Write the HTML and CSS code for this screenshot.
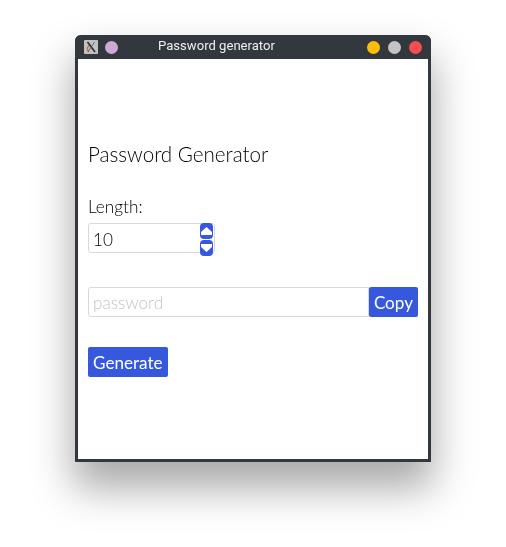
FILE: index.html
```html
<!DOCTYPE html>
<html lang="en">
<head>
<meta charset="utf-8">
<title>Password generator</title>
<link rel="stylesheet" href="styles.css">
</head>
<body>
<div class="window">
  <header class="titlebar">
    <div class="tb-left">
      <svg class="app-icon" width="14" height="14" viewBox="0 0 14 14">
        <rect width="14" height="14" rx="1" fill="#bfc1c2"/>
        <path d="M5.5 5 Q1.5 8.5 5 12" stroke="#d9682b" stroke-width="1.3" fill="none"/>
        <path d="M3.5 2 L11 12" stroke="#2f3133" stroke-width="1.7" fill="none"/>
        <path d="M10.5 2 L4 12" stroke="#55585a" stroke-width=".8" fill="none"/>
      </svg>
      <span class="dot dot-pin"></span>
    </div>
    <div class="tb-title">Password generator</div>
    <div class="tb-right">
      <span class="dot dot-min"></span>
      <span class="dot dot-max"></span>
      <span class="dot dot-close"></span>
    </div>
  </header>
  <main class="content">
    <h1 class="heading">Password Generator</h1>
    <label class="label" for="len">Length:</label>
    <div class="number">
      <span class="number-val" id="len">10</span>
      <div class="spin">
        <span class="spin-btn"><svg width="11" height="8" viewBox="0 0 11 8"><path d="M5.5 0 L11 5 V8 H0 V5 Z" fill="#fff"/></svg></span>
        <span class="spin-btn"><svg width="11" height="8" viewBox="0 0 11 8"><path d="M0 0 H11 V3 L5.5 8 L0 3 Z" fill="#fff"/></svg></span>
      </div>
    </div>
    <div class="pw-row">
      <input class="pw" type="text" placeholder="password">
      <button class="btn" type="button">Copy</button>
    </div>
    <button class="btn gen" type="button">Generate</button>
  </main>
</div>
</body>
</html>
```
FILE: styles.css
```css
* { box-sizing: border-box; }
html, body { margin: 0; padding: 0; background: #fff; }
body { width: 506px; height: 547px; overflow: hidden; padding: 35px 75px 0; font-family: Lato, sans-serif; }
.window {
  width: 356px;
  height: 427px;
  background: #fff;
  border: 3px solid #32383e;
  border-top: 0;
  border-radius: 6px 6px 0 0;
  box-shadow: 0 24px 40px 2px rgba(0,0,0,.34);
  display: flex;
  flex-direction: column;
}
.titlebar {
  height: 24px;
  margin: 0 -3px;
  background: #32383e;
  border-radius: 6px 6px 0 0;
  display: flex;
  align-items: center;
  position: relative;
  padding: 0 9px 0 9px;
  justify-content: space-between;
  flex: none;
}
.tb-left, .tb-right { display: flex; align-items: center; }
.tb-left { gap: 7px; }
.tb-right { gap: 8px; }
.tb-title {
  position: absolute;
  left: 83px;
  top: 3px;
  font: 13.1px/15px Roboto, sans-serif;
  color: #eef0f2;
  will-change: transform;
}
.dot { width: 13px; height: 13px; border-radius: 50%; display: block; }
.dot-pin { background: #cfa9d6; }
.dot-min { background: #fdbe0a; }
.dot-max { background: #c4c4c4; }
.dot-close { background: #f44d52; }
.content { padding: 0 10px; flex: 1; display: flex; flex-direction: column; align-items: flex-start; will-change: transform; }
.heading { margin: 83px 0 0; font-size: 20.6px; line-height: 24px; font-weight: 300; color: #000; }
.label { margin-top: 31px; font-size: 17.2px; line-height: 20px; font-weight: 300; color: #000; }
.number {
  margin-top: 6px;
  width: 127px;
  height: 30px;
  border: 1px solid #d8d8d8;
  border-radius: 3px;
  display: flex;
  align-items: center;
  justify-content: space-between;
  position: relative;
}
.number-val { font-size: 17.2px; line-height: 24px; padding-top: 3px; font-weight: 300; color: #000; padding-left: 4px; }
.spin { position: absolute; right: 1px; top: -1px; display: flex; flex-direction: column; gap: 1px; }
.spin-btn {
  width: 13px;
  height: 16px;
  background: #3558dc;
  border-radius: 4px;
  display: flex;
  align-items: center;
  justify-content: center;
}
.pw-row { margin-top: 34px; display: flex; width: 330px; }
.pw {
  flex: 1;
  min-width: 0;
  height: 30px;
  border: 1px solid #d8d8d8;
  border-radius: 3px 0 0 3px;
  padding: 0 4px;
  font: 300 17.2px Lato, sans-serif;
  color: #222;
  outline: none;
}
.pw::placeholder { color: #c4c4c4; opacity: 1; }
.btn {
  height: 30px;
  border: 0;
  border-radius: 2px;
  background: #3558dc;
  color: #fff;
  font: 400 17.1px Lato, sans-serif;
  padding: 0 5px;
  margin: 0;
}
.gen { margin-top: 30px; }
```
